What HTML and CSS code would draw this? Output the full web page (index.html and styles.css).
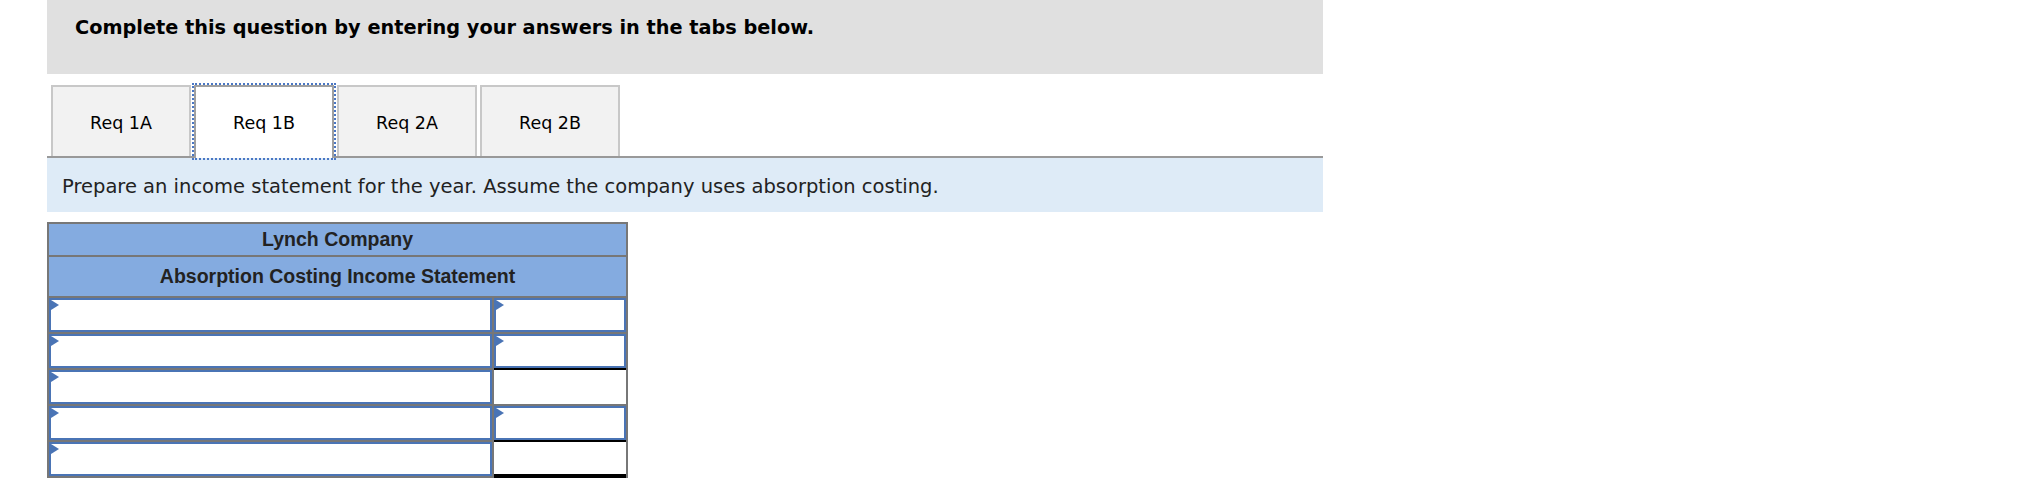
FILE: index.html
```html
<!DOCTYPE html>
<html lang="en">
<head>
<meta charset="utf-8">
<title>Lynch Company</title>
<link rel="stylesheet" href="styles.css">
</head>
<body>
<div class="page">
  <div class="banner">
    <h1 class="banner-title">Complete this question by entering your answers in the tabs below.</h1>
  </div>
  <div class="tabs">
    <div class="tab">Req 1A</div>
    <div class="tab tab-active">Req 1B</div>
    <div class="tab">Req 2A</div>
    <div class="tab">Req 2B</div>
  </div>
  <div class="prompt">Prepare an income statement for the year. Assume the company uses absorption costing.</div>
  <div class="stmt">
    <div class="stmt-head stmt-head-1">Lynch Company</div>
    <div class="stmt-head stmt-head-2">Absorption Costing Income Statement</div>

    <div class="cell"><div class="field"><span class="marker"></span></div></div>
    <div class="cell"><div class="field"><span class="marker"></span></div></div>

    <div class="cell"><div class="field"><span class="marker"></span></div></div>
    <div class="cell cell-under"><div class="field"><span class="marker"></span></div></div>

    <div class="cell"><div class="field"><span class="marker"></span></div></div>
    <div class="cell"></div>

    <div class="cell"><div class="field"><span class="marker"></span></div></div>
    <div class="cell cell-under"><div class="field"><span class="marker"></span></div></div>

    <div class="cell"><div class="field"><span class="marker"></span></div></div>
    <div class="cell cell-total"></div>
  </div>
</div>
</body>
</html>
```

FILE: styles.css
```css
html, body {
  margin: 0;
  padding: 0;
  background: #ffffff;
}

.page {
  padding-left: 47px;
  width: 1276px;
}

.banner {
  background: #e0e0e0;
  height: 74px;
  box-sizing: border-box;
  padding: 16px 0 0 28px;
}

.banner-title {
  margin: 0;
  font-family: "DejaVu Sans", Verdana, sans-serif;
  font-weight: bold;
  font-size: 19.3px;
  line-height: 23px;
  color: #000000;
}

.tabs {
  display: flex;
  align-items: stretch;
  gap: 3px;
  margin-top: 11px;
  padding-left: 4px;
  height: 71px;
  border-bottom: 2px solid #999999;
}

.tab {
  width: 140px;
  box-sizing: border-box;
  border: 2px solid #c8c8c8;
  border-bottom: none;
  background: #f2f2f2;
  display: flex;
  align-items: center;
  justify-content: center;
  padding-top: 2px;
  font-family: "DejaVu Sans", Verdana, sans-serif;
  font-size: 17.5px;
  color: #000000;
}

.tab-active {
  position: relative;
  background: #ffffff;
  border-color: #a0a0a0;
  margin-bottom: -2px;
  padding-bottom: 2px;
  outline: 2px dotted #4a77c4;
}

.prompt {
  background: #deebf7;
  height: 54px;
  box-sizing: border-box;
  padding: 2px 0 0 15px;
  display: flex;
  align-items: center;
  font-family: "DejaVu Sans", Verdana, sans-serif;
  font-size: 19.5px;
  color: #222222;
}

.stmt {
  margin-top: 10px;
  display: grid;
  grid-template-columns: 443px 132px;
  grid-template-rows: 31px 39px repeat(5, 34px);
  gap: 2px;
  padding: 2px;
  background: #777777;
  width: max-content;
}

.stmt-head {
  grid-column: 1 / -1;
  background: #84abe0;
  display: flex;
  align-items: center;
  justify-content: center;
  font-family: "Liberation Sans", Arial, sans-serif;
  font-weight: bold;
  font-size: 19.5px;
  color: #222222;
}

.cell {
  background: #ffffff;
  position: relative;
}

.cell-under {
  box-shadow: 0 2px 0 #000000;
}

.cell-total {
  box-shadow: 0 2px 0 #000000, inset 0 -2px 0 #000000;
}

.field {
  position: relative;
  height: 100%;
  box-sizing: border-box;
  border: 2px solid #4a74b5;
  background: #ffffff;
}

.marker {
  position: absolute;
  left: 0;
  top: 0;
  width: 0;
  height: 0;
  border-top: 5px solid transparent;
  border-bottom: 5px solid transparent;
  border-left: 8px solid #4a74b5;
}
```
